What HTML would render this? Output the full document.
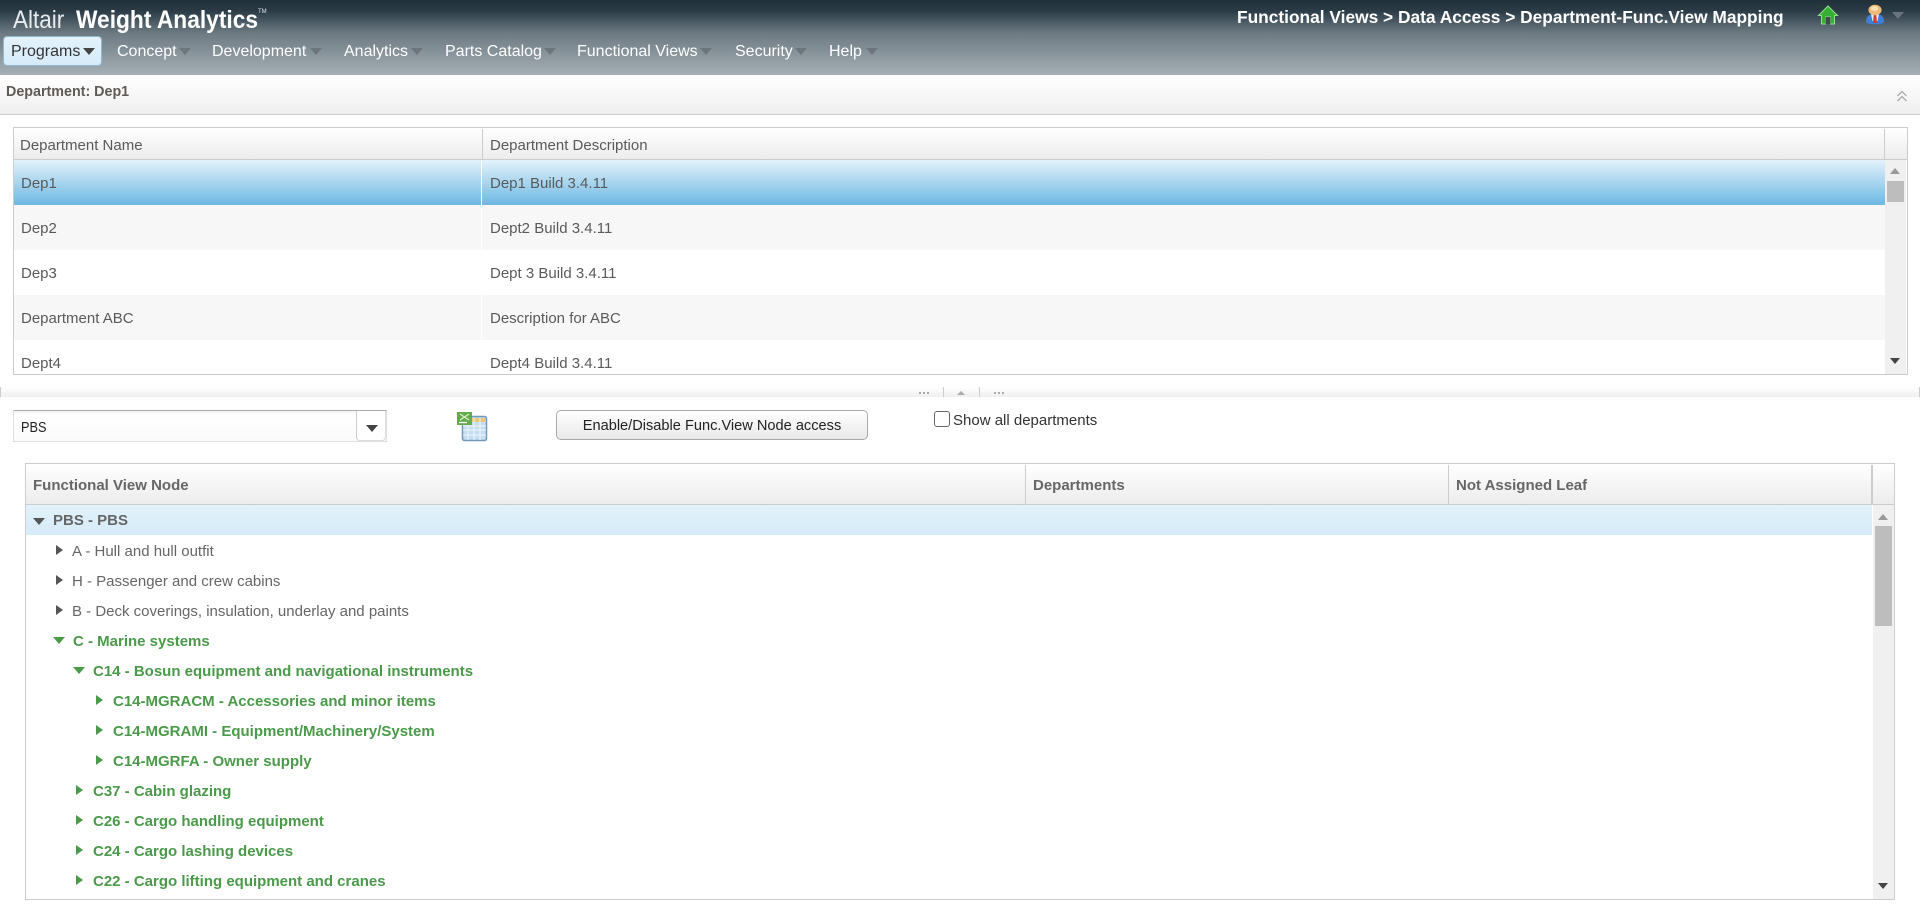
<!DOCTYPE html>
<html><head><meta charset="utf-8"><title>Altair Weight Analytics</title>
<style>
html,body{margin:0;padding:0;background:#fff;width:1920px;height:923px;overflow:hidden}
body{position:relative;font-family:"Liberation Sans",Arial,sans-serif;font-size:15px;color:#5a5a5a}
div,span{position:absolute;white-space:nowrap;box-sizing:border-box}
svg{position:absolute;overflow:visible}
#hdr{left:0;top:0;width:1920px;height:75px;background:linear-gradient(#1f303b 0,#2a3b46 14%,#6e7b83 45%,#a5afb5 100%)}
.m{top:42px;height:20px;line-height:20px;color:#fff;font-size:16px}
.a{width:0;height:0;border-left:6.5px solid transparent;border-right:6.5px solid transparent;border-top:7px solid #6b757b;top:48px}
#panel{left:0;top:75px;width:1920px;height:40px;background:linear-gradient(#fff,#efefef);border-bottom:1px solid #ccc}
.hcell{background:linear-gradient(#fff,#ececec)}
.g1t{height:45px;line-height:47px;color:#5a5a5a}
.row{left:14px;width:1871px;height:45px}
.tr{height:30px;line-height:32px;font-size:15px;color:#666}
.g{color:#4a9a4a;font-weight:bold}
.d{color:#666;font-weight:bold}
.tri-r{width:0;height:0;border-top:5.5px solid transparent;border-bottom:5.5px solid transparent;border-left:7px solid #555}
.tri-d{width:0;height:0;border-left:6.5px solid transparent;border-right:6.5px solid transparent;border-top:7px solid #555}
.gr{border-left-color:#4a9a4a}.gd{border-top-color:#4a9a4a}
.up{width:0;height:0;border-left:5.5px solid transparent;border-right:5.5px solid transparent;border-bottom:6px solid #999}
.dn{width:0;height:0;border-left:5.5px solid transparent;border-right:5.5px solid transparent;border-top:6px solid #444}
</style></head><body>

<div id="hdr"></div>
<span style="left:13px;top:5px;font-size:25px;line-height:30px;color:#e8ecee;transform:scaleX(.9);transform-origin:0 0">Altair</span>
<span style="left:76px;top:5px;font-size:25px;line-height:30px;color:#fff;font-weight:bold;transform:scaleX(.91);transform-origin:0 0">Weight Analytics</span>
<span style="left:258px;top:8px;font-size:6px;line-height:8px;color:#dfe3e5">TM</span>

<div style="left:3px;top:36px;width:99px;height:30px;border-radius:4px;background:linear-gradient(#e3f2fc,#d6ebf9);border:1px solid #8fb8d2"></div>
<span class="m" style="left:11px;color:#333">Programs</span>
<div class="a" style="left:83px;border-top-color:#444"></div>
<span class="m" style="left:117px">Concept</span><div class="a" style="left:179px"></div>
<span class="m" style="left:212px">Development</span><div class="a" style="left:310px"></div>
<span class="m" style="left:344px">Analytics</span><div class="a" style="left:411px"></div>
<span class="m" style="left:445px">Parts Catalog</span><div class="a" style="left:544px"></div>
<span class="m" style="left:577px">Functional Views</span><div class="a" style="left:700px"></div>
<span class="m" style="left:735px">Security</span><div class="a" style="left:795px"></div>
<span class="m" style="left:829px">Help</span><div class="a" style="left:866px"></div>

<span style="left:1237px;top:7px;line-height:20px;font-size:17.33px;font-weight:bold;color:#fff">Functional Views &gt; Data Access &gt; Department-Func.View Mapping</span>

<svg style="left:1818px;top:5px" width="20" height="20" viewBox="0 0 20 20">
<path d="M10 1 L19.5 10.5 L16.5 10.5 L16.5 19 L12.5 19 L12.5 12 L7.5 12 L7.5 19 L3.5 19 L3.5 10.5 L.5 10.5 Z" fill="#35b035" stroke="#94e08e" stroke-width="1"/>
<path d="M7.5 12h5v7h-5z" fill="#3d4d48"/>
<path d="M2 1h3v4z" fill="#14501f"/>
</svg>
<svg style="left:1866px;top:5px" width="18" height="20" viewBox="0 0 18 20">
<path d="M0 17 C0 11 3 9 9 9 C15 9 18 11 18 17 C18 20 0 20 0 17Z" fill="#3f7fd6"/>
<path d="M5 9.5 L13 9.5 L11.5 16 L6.5 16Z" fill="#dfe9fa"/>
<path d="M7.7 10 h2.6 l.6 8 h-3.8z" fill="#d33a2c"/>
<ellipse cx="9" cy="5" rx="6.6" ry="5.2" fill="#eebb76"/>
<ellipse cx="8.5" cy="3.5" rx="3.6" ry="2.4" fill="#fae0b2"/>
</svg>
<div class="a" style="left:1892px;top:12px;border-top-color:#69737a"></div>

<div id="panel"></div>
<span style="left:6px;top:82px;line-height:20px;font-size:14.3px;font-weight:bold;color:#5f5a55">Department: Dep1</span>
<svg style="left:1896px;top:90px" width="12" height="12" viewBox="0 0 12 12" fill="none" stroke="#a9a9a9" stroke-width="1.3"><path d="M1.5 6 L6 1.5 L10.5 6"/><path d="M1.5 11 L6 6.5 L10.5 11"/></svg>

<!-- Grid 1 -->
<div style="left:13px;top:127px;width:1895px;height:248px;border:1px solid #ccc;background:#fff"></div>
<div class="hcell" style="left:14px;top:128px;width:1893px;height:32px;border-bottom:1px solid #ccc"></div>
<div style="left:482px;top:129px;width:1px;height:30px;background:#ccc"></div>
<div style="left:1884px;top:129px;width:1px;height:30px;background:#ccc"></div>
<span style="left:20px;top:136px;line-height:20px;color:#5a5a5a">Department Name</span>
<span style="left:490px;top:136px;line-height:20px;color:#5a5a5a">Department Description</span>

<div class="row" style="top:160px;background:linear-gradient(#e3f2fb,#6db8e3)"></div>
<div class="row" style="top:205px;background:#f7f7f7"></div>
<div class="row" style="top:250px;background:#fff"></div>
<div class="row" style="top:295px;background:#f7f7f7"></div>
<div style="left:481px;top:160px;width:1px;height:214px;background:#fff"></div>
<span class="g1t" style="left:21px;top:160px">Dep1</span><span class="g1t" style="left:490px;top:160px">Dep1 Build 3.4.11</span>
<span class="g1t" style="left:21px;top:205px">Dep2</span><span class="g1t" style="left:490px;top:205px">Dept2 Build 3.4.11</span>
<span class="g1t" style="left:21px;top:250px">Dep3</span><span class="g1t" style="left:490px;top:250px">Dept 3 Build 3.4.11</span>
<span class="g1t" style="left:21px;top:295px">Department ABC</span><span class="g1t" style="left:490px;top:295px">Description for ABC</span>
<span class="g1t" style="left:21px;top:340px;height:34px;line-height:47px;overflow:hidden">Dept4</span><span class="g1t" style="left:490px;top:340px;height:34px;line-height:47px;overflow:hidden">Dept4 Build 3.4.11</span>
<div style="left:1885px;top:160px;width:21px;height:214px;background:#f0f0f0"></div>
<div class="up" style="left:1890px;top:168px"></div>
<div style="left:1887px;top:181px;width:17px;height:21px;background:#bdbdbd"></div>
<div class="dn" style="left:1890px;top:358px"></div>

<!-- Splitter -->
<div style="left:0;top:387px;width:1920px;height:10px;background:linear-gradient(#fff,#efefef)"></div>
<div style="left:0;top:387px;width:1px;height:10px;background:#ccc"></div>
<div style="left:1919px;top:387px;width:1px;height:10px;background:#ccc"></div>
<div style="left:943px;top:387px;width:1px;height:10px;background:#ccc"></div>
<div style="left:979px;top:387px;width:1px;height:10px;background:#ccc"></div>
<div style="left:919px;top:392px;width:10px;height:2px;background:repeating-linear-gradient(90deg,#aaa 0 2px,transparent 2px 4px)"></div>
<div style="left:994px;top:392px;width:10px;height:2px;background:repeating-linear-gradient(90deg,#aaa 0 2px,transparent 2px 4px)"></div>
<div style="left:957px;top:391px;width:0;height:0;border-left:4px solid transparent;border-right:4px solid transparent;border-bottom:4px solid #aaa"></div>

<!-- Toolbar -->
<div style="left:13px;top:410px;width:374px;height:32px;background:linear-gradient(#f4f4f4,#fff 15%,#fafafa);border:1px solid #e0e0e0;border-top:1px solid #aaa"></div>
<div style="left:356px;top:411px;width:30px;height:30px;background:#fff;border:1px solid #ddd;border-left-color:#ccc;border-top:none;border-radius:0 0 4px 4px"></div>
<div class="dn" style="left:366px;top:425px;border-left-width:6px;border-right-width:6px;border-top-width:7px"></div>
<span style="left:21px;top:418px;line-height:20px;color:#222;transform:scaleX(.85);transform-origin:0 0">PBS</span>

<svg style="left:457px;top:412px" width="31" height="30" viewBox="0 0 31 30">
<rect x="5.5" y="4.5" width="24" height="24" rx="2" fill="#c6def2" stroke="#7099b8" stroke-width="1.5"/>
<path d="M6 6h23v4H6z" fill="#e9c878"/>
<path d="M6 14h23M6 18h23M6 23h23M11 6v22M17 6v22M23 6v22" stroke="#eef5fb" stroke-width="1"/>
<rect x="0" y="0" width="15" height="13" fill="#63ab4d"/>
<path d="M3 2l9 6M12 2l-9 6" stroke="#d9efc9" stroke-width="1.3"/>
<path d="M2 10.5h8" stroke="#fff" stroke-width="1.4"/>
</svg>

<div style="left:556px;top:410px;width:312px;height:30px;border:1px solid #aaa;border-radius:5px;background:linear-gradient(#fff,#e9e9e9);text-align:center;line-height:31px;font-size:14.6px;color:#222;position:absolute">Enable/Disable Func.View Node access</div>

<div style="left:934px;top:411px;width:16px;height:16px;border:1px solid #666;border-radius:3px;background:#fff"></div>
<span style="left:953px;top:411px;line-height:20px;color:#333">Show all departments</span>

<!-- Grid 2 -->
<div style="left:25px;top:463px;width:1870px;height:437px;border:1px solid #ccc;background:#fff"></div>
<div class="hcell" style="left:26px;top:464px;width:1868px;height:41px;border-bottom:1px solid #ccc"></div>
<div style="left:1025px;top:465px;width:1px;height:39px;background:#ccc"></div>
<div style="left:1448px;top:465px;width:1px;height:39px;background:#ccc"></div>
<div style="left:1871px;top:465px;width:2px;height:39px;background:#ccc"></div>
<span class="d" style="left:33px;top:476px;line-height:20px;font-size:15px">Functional View Node</span>
<span class="d" style="left:1033px;top:476px;line-height:20px;font-size:15px">Departments</span>
<span class="d" style="left:1456px;top:476px;line-height:20px;font-size:15px">Not Assigned Leaf</span>

<div style="left:26px;top:505px;width:1846px;height:30px;background:linear-gradient(#e2f2fb,#d5ebf8)"></div>
<div style="left:1873px;top:505px;width:21px;height:394px;background:#f0f0f0"></div>
<div class="up" style="left:1878px;top:514px"></div>
<div style="left:1875px;top:526px;width:17px;height:100px;background:#bdbdbd"></div>
<div class="dn" style="left:1878px;top:883px"></div>

<div class="tri-d" style="left:33px;top:518px"></div><span class="tr d" style="left:53px;top:505px">PBS - PBS</span>
<div class="tri-r" style="left:56px;top:545px"></div><span class="tr" style="left:72px;top:536px">A - Hull and hull outfit</span>
<div class="tri-r" style="left:56px;top:575px"></div><span class="tr" style="left:72px;top:566px">H - Passenger and crew cabins</span>
<div class="tri-r" style="left:56px;top:605px"></div><span class="tr" style="left:72px;top:596px">B - Deck coverings, insulation, underlay and paints</span>
<div class="tri-d gd" style="left:53px;top:637px"></div><span class="tr g" style="left:73px;top:626px">C - Marine systems</span>
<div class="tri-d gd" style="left:73px;top:667px"></div><span class="tr g" style="left:93px;top:656px">C14 - Bosun equipment and navigational instruments</span>
<div class="tri-r gr" style="left:96px;top:695px"></div><span class="tr g" style="left:113px;top:686px">C14-MGRACM - Accessories and minor items</span>
<div class="tri-r gr" style="left:96px;top:725px"></div><span class="tr g" style="left:113px;top:716px">C14-MGRAMI - Equipment/Machinery/System</span>
<div class="tri-r gr" style="left:96px;top:755px"></div><span class="tr g" style="left:113px;top:746px">C14-MGRFA - Owner supply</span>
<div class="tri-r gr" style="left:76px;top:785px"></div><span class="tr g" style="left:93px;top:776px">C37 - Cabin glazing</span>
<div class="tri-r gr" style="left:76px;top:815px"></div><span class="tr g" style="left:93px;top:806px">C26 - Cargo handling equipment</span>
<div class="tri-r gr" style="left:76px;top:845px"></div><span class="tr g" style="left:93px;top:836px">C24 - Cargo lashing devices</span>
<div class="tri-r gr" style="left:76px;top:875px"></div><span class="tr g" style="left:93px;top:866px">C22 - Cargo lifting equipment and cranes</span>
</body></html>
